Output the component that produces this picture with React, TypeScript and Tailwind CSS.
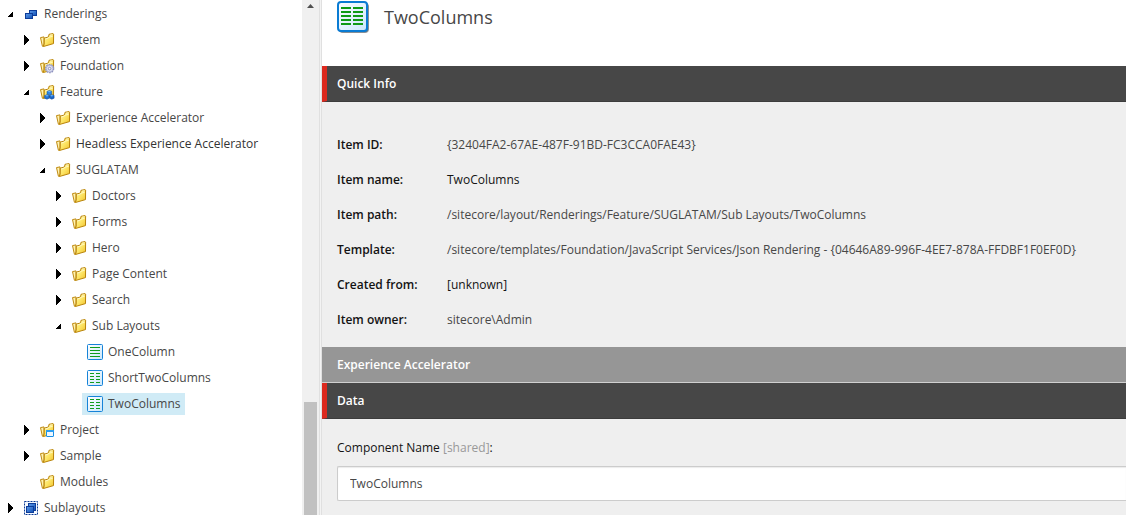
import type { ReactNode } from "react";

type IconName =
  | "renderings"
  | "folder"
  | "gear"
  | "cubes"
  | "window"
  | "one"
  | "two"
  | "sublayouts";

type Node = {
  label: string;
  icon: IconName;
  state?: "open" | "closed";
  dark?: boolean;
  selected?: boolean;
  children?: Node[];
};

const tree: Node[] = [
  {
    label: "Renderings",
    icon: "renderings",
    state: "open",
    children: [
      { label: "System", icon: "folder", state: "closed" },
      { label: "Foundation", icon: "gear", state: "closed" },
      {
        label: "Feature",
        icon: "cubes",
        state: "open",
        children: [
          { label: "Experience Accelerator", icon: "folder", state: "closed" },
          { label: "Headless Experience Accelerator", icon: "folder", state: "closed", dark: true },
          {
            label: "SUGLATAM",
            icon: "folder",
            state: "open",
            children: [
              { label: "Doctors", icon: "folder", state: "closed" },
              { label: "Forms", icon: "folder", state: "closed" },
              { label: "Hero", icon: "folder", state: "closed" },
              { label: "Page Content", icon: "folder", state: "closed" },
              { label: "Search", icon: "folder", state: "closed" },
              {
                label: "Sub Layouts",
                icon: "folder",
                state: "open",
                children: [
                  { label: "OneColumn", icon: "one" },
                  { label: "ShortTwoColumns", icon: "two" },
                  { label: "TwoColumns", icon: "two", selected: true },
                ],
              },
            ],
          },
        ],
      },
      { label: "Project", icon: "window", state: "closed" },
      { label: "Sample", icon: "folder", state: "closed" },
      { label: "Modules", icon: "folder" },
    ],
  },
  { label: "Sublayouts", icon: "sublayouts", state: "closed" },
];

const quickInfo = [
  { label: "Item ID:", value: "{32404FA2-67AE-487F-91BD-FC3CCA0FAE43}" },
  { label: "Item name:", value: "TwoColumns", dark: true },
  { label: "Item path:", value: "/sitecore/layout/Renderings/Feature/SUGLATAM/Sub Layouts/TwoColumns" },
  {
    label: "Template:",
    value: "/sitecore/templates/Foundation/JavaScript Services/Json Rendering - {04646A89-996F-4EE7-878A-FFDBF1F0EF0D}",
  },
  { label: "Created from:", value: "[unknown]", dark: true },
  { label: "Item owner:", value: "sitecore\\Admin" },
];

function Gradients() {
  return (
    <svg width="0" height="0" className="absolute" aria-hidden="true">
      <defs>
        <linearGradient id="gold" x1="0" y1="0" x2="1" y2="1">
          <stop offset="0" stopColor="#fff6a6" />
          <stop offset="0.5" stopColor="#fde667" />
          <stop offset="1" stopColor="#f0c02a" />
        </linearGradient>
        <linearGradient id="blue" x1="0" y1="0" x2="1" y2="1">
          <stop offset="0" stopColor="#5e9bea" />
          <stop offset="1" stopColor="#0f4fb4" />
        </linearGradient>
        <linearGradient id="sheet" x1="0" y1="0" x2="1" y2="1">
          <stop offset="0" stopColor="#ffffff" />
          <stop offset="1" stopColor="#c9e6fb" />
        </linearGradient>
      </defs>
    </svg>
  );
}

function FolderShape() {
  return (
    <g strokeLinejoin="round">
      <path d="M1.5 5.6 5 4.9 5 12 4.2 14.4 3.4 14.2Z" fill="#fff3b0" stroke="#c08a10" />
      <path
        d="M5.3 6.1 8.8 5.2 9.7 4.1 10 2.3 14.1 1.6 14.6 2.1 14.5 11.6 4.4 14.5 5.2 12.2Z"
        fill="url(#gold)"
        stroke="#b98309"
      />
      <path d="M10.8 3.2 13.6 2.7" fill="none" stroke="#fffbd8" strokeWidth="0.8" />
      <path d="M6.1 7 9.4 6.1 10.4 5 13.6 4.4" fill="none" stroke="#fffbd8" strokeWidth="0.8" />
    </g>
  );
}

function SheetIcon({ columns }: { columns: 1 | 2 }) {
  return (
    <g>
      <rect x="0.5" y="0.5" width="15" height="15" rx="1" fill="url(#sheet)" stroke="#1683d8" />
      <path
        d={
          columns === 1
            ? "M3 3.5H13M3 6.5H13M3 9.5H13M3 12.5H13"
            : "M3 3.5H7M9 3.5H13M3 6.5H7M9 6.5H13M3 9.5H7M9 9.5H13M3 12.5H7M9 12.5H13"
        }
        stroke="#109c1c"
      />
    </g>
  );
}

const drawings: Record<IconName, ReactNode> = {
  renderings: (
    <g stroke="#0d3c98">
      <rect x="6.5" y="4.5" width="7" height="5" fill="url(#blue)" />
      <rect x="2.5" y="7.5" width="7" height="5" fill="url(#blue)" />
    </g>
  ),
  folder: <FolderShape />,
  gear: (
    <g>
      <FolderShape />
      <circle cx="10.6" cy="10.6" r="4" fill="#c9cbe6" stroke="#8e92bd" strokeWidth="1.4" strokeDasharray="1.6 0.9" />
      <circle cx="10.6" cy="10.6" r="3.4" fill="#dcdef2" stroke="#9a9ec8" strokeWidth="0.6" />
      <circle cx="10.6" cy="10.6" r="1.3" fill="#f6f6ff" stroke="#7b80ad" strokeWidth="0.8" />
    </g>
  ),
  cubes: (
    <g>
      <FolderShape />
      <path d="M8 7.4 10.3 6.4 12.7 7.2 12.7 10 10.3 11 8 10Z" fill="#2a86e8" stroke="#0c4fae" strokeWidth="0.5" />
      <path d="M5.6 11.6 8 10.6 10.2 11.4 10.2 14.2 8 15.2 5.6 14.2Z" fill="#2173d8" stroke="#0b469f" strokeWidth="0.5" />
      <path d="M10.5 11.6 12.8 10.6 15.1 11.4 15.1 14.2 12.8 15.2 10.5 14.2Z" fill="#1a67c8" stroke="#0a3f93" strokeWidth="0.5" />
      <path
        d="M8.5 7.6 10.3 6.9 12.2 7.5 10.3 8.3ZM6.1 11.8 8 11.1 9.7 11.7 8 12.5ZM11 11.8 12.8 11.1 14.6 11.7 12.8 12.5Z"
        fill="#6cb8ff"
      />
    </g>
  ),
  window: (
    <g>
      <FolderShape />
      <rect x="7.5" y="8.5" width="7" height="6" rx="0.5" fill="#eef8ff" stroke="#1a8fe6" />
      <path d="M7 9H15" stroke="#2c9df0" strokeWidth="2" />
    </g>
  ),
  one: <SheetIcon columns={1} />,
  two: <SheetIcon columns={2} />,
  sublayouts: (
    <g>
      <rect x="1.5" y="1.5" width="13" height="13" fill="#f4f9ff" stroke="#0c3a94" strokeDasharray="2 1" />
      <rect x="5.5" y="3.5" width="7" height="7" fill="url(#blue)" stroke="#0d3c98" />
      <rect x="3.5" y="6.5" width="7" height="6" fill="url(#blue)" stroke="#0d3c98" />
    </g>
  ),
};

function Arrow({ state }: { state?: "open" | "closed" }) {
  return (
    <svg width="8" height="10" viewBox="0 0 8 10" className="shrink-0" shapeRendering="crispEdges" aria-hidden="true">
      {state === "open" && <path d="M6 2V8H0Z" />}
      {state === "closed" && <path d="M1 0 6 5 1 10Z" />}
    </svg>
  );
}

function TreeList({ nodes, nested }: { nodes: Node[]; nested?: boolean }) {
  return (
    <ul className={nested ? "pl-4" : "pl-[7px]"}>
      {nodes.map((node) => (
        <li key={node.label}>
          <div className="flex h-[26px] items-center gap-[3px]">
            <Arrow state={node.state} />
            <button
              type="button"
              className={`flex h-[22px] items-center gap-[5px] whitespace-nowrap px-[5px] ${
                node.selected ? "bg-[#d0ebf6]" : ""
              } ${node.dark ? "text-[#333333]" : "text-[#474747]"}`}
            >
              <svg width="16" height="16" viewBox="0 0 16 16" className="shrink-0" aria-hidden="true">
                {drawings[node.icon]}
              </svg>
              {node.label}
            </button>
          </div>
          {node.children && <TreeList nodes={node.children} nested />}
        </li>
      ))}
    </ul>
  );
}

function SectionBar({ title, collapsed }: { title: string; collapsed?: boolean }) {
  return (
    <button
      type="button"
      className={`flex h-9 w-full items-center border-b text-left font-semibold text-white ${
        collapsed
          ? "border-[#d0d0d0] bg-[#969696] pl-[15px]"
          : "border-l-[5px] border-b-[#3c3c3c] border-l-[#dc291e] bg-[#474747] pl-[10px]"
      }`}
    >
      {title}
    </button>
  );
}

export default function App() {
  return (
    <div className="flex h-screen overflow-hidden bg-white font-['Open_Sans',sans-serif] text-xs text-[#474747]">
      <Gradients />
      <nav aria-label="Content tree" className="w-[302px] shrink-0 overflow-hidden pt-px">
        <TreeList nodes={tree} />
      </nav>

      <div className="flex w-[17px] shrink-0 flex-col items-center bg-[#f0f0f0]" aria-hidden="true">
        <svg width="17" height="12" viewBox="0 0 17 12">
          <path d="M5 8 8.5 4 12 8Z" fill="#505050" />
        </svg>
        <div className="mt-[390px] w-[13px] flex-1 bg-[#c1c1c1]" />
      </div>
      <div className="w-[3px] shrink-0 border-x border-[#e0e0e0] bg-[#f3f3f3]" />

      <main className="flex min-w-0 flex-1 flex-col overflow-hidden bg-[#efefef]">
        <header className="flex h-[66px] shrink-0 items-start gap-[14px] bg-white pl-[15px] pt-px">
          <svg width="33" height="33" viewBox="0 0 33 33" aria-hidden="true">
            <rect x="2" y="2" width="30" height="30" rx="4" fill="#a3a8ad" />
            <rect x="1.5" y="1.5" width="30" height="30" rx="4" fill="#6f777e" />
            <rect x="1" y="1" width="29" height="29" rx="3" fill="url(#sheet)" stroke="#0a7bd3" strokeWidth="2" />
            <path
              d="M4 7H14M16 7H26M4 11H14M16 11H26M4 15H14M16 15H26M4 19H14M16 19H26M4 23H14M16 23H26"
              stroke="#0f9a15"
              strokeWidth="2"
            />
          </svg>
          <h1 className="text-lg leading-8">TwoColumns</h1>
        </header>

        <SectionBar title="Quick Info" />
        <dl className="pb-[10px] pl-[15px] pt-[25px]">
          {quickInfo.map((row) => (
            <div key={row.label} className="flex h-[35px] items-center whitespace-nowrap">
              <dt className="w-[110px] shrink-0 font-semibold text-[#131313]">{row.label}</dt>
              <dd className={row.dark ? "text-[#131313]" : ""}>{row.value}</dd>
            </div>
          ))}
        </dl>

        <SectionBar title="Experience Accelerator" collapsed />
        <SectionBar title="Data" />
        <div className="pl-[15px] pt-5">
          <label htmlFor="component-name" className="block leading-[18px] text-[#131313]">
            Component Name <span className="text-[#999999]">[shared]</span>:
          </label>
          <input
            id="component-name"
            type="text"
            defaultValue="TwoColumns"
            className="mt-[9px] h-[35px] w-full rounded-l-xs border border-r-0 border-[#cccccc] bg-white px-3 shadow-[inset_0_1px_1px_rgba(0,0,0,0.08)] outline-none"
          />
        </div>
      </main>
    </div>
  );
}
